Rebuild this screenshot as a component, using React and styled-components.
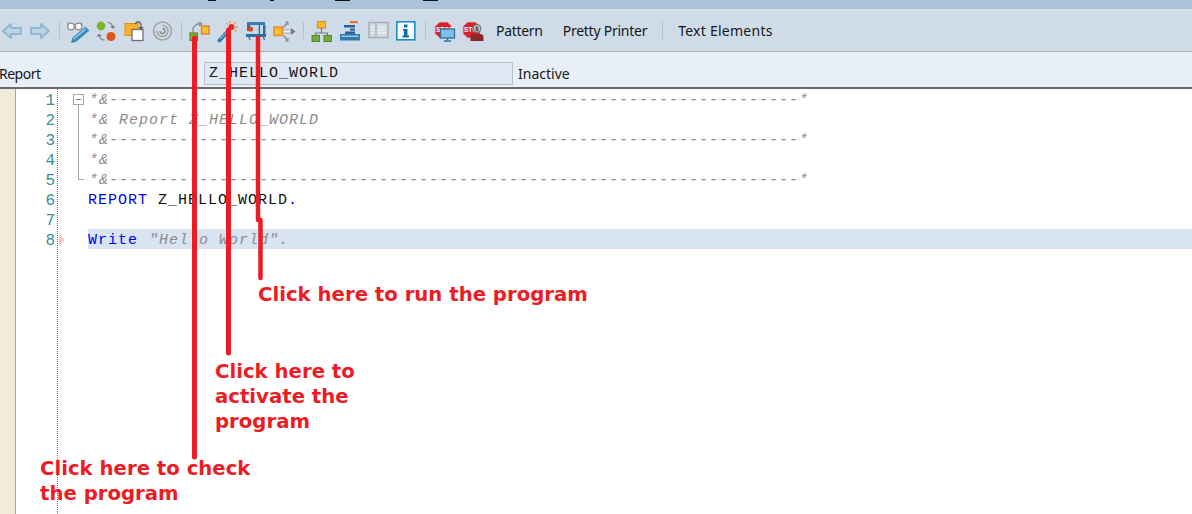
import React from "react";
import styled, { createGlobalStyle } from "styled-components";

const Global = createGlobalStyle`
  html, body {
    margin: 0;
    height: 100%;
    overflow: hidden;
    background: #fff;
  }
  #root {
    height: 100%;
  }
`;

const Page = styled.div`
  position: relative;
  display: flex;
  flex-direction: column;
  width: 1192px;
  height: 514px;
  overflow: hidden;
  font-family: "Noto Sans", sans-serif;
`;

const TitleBar = styled.div`
  position: relative;
  flex: 0 0 9px;
  background: #abc3da;
  border-bottom: 1px solid #dde6ee;
`;

const TitleMark = styled.span`
  position: absolute;
  top: 0;
  left: ${(p) => p.$left}px;
  width: ${(p) => p.$width}px;
  height: 1px;
  background: #111;
`;

const Toolbar = styled.div`
  flex: 0 0 41px;
  display: flex;
  align-items: center;
  margin-left: -2px;
  background: #cfdce7;
  border-bottom: 1px solid #a3afba;
`;

const Tool = styled.div`
  flex: 0 0 28px;
  height: 24px;
  display: flex;
  align-items: center;
  justify-content: center;
  svg {
    display: block;
  }
`;

const Separator = styled.div`
  flex: 0 0 1px;
  height: 17px;
  margin: 0 4px 0 ${(p) => p.$before ?? 5}px;
  background: #a9c3da;
`;

const TextTool = styled.span`
  margin-left: ${(p) => p.$gap}px;
  font-size: 14px;
  letter-spacing: ${(p) => p.$tracking}px;
  color: #14171c;
  white-space: nowrap;
`;

const InfoRow = styled.div`
  flex: 0 0 35px;
  display: flex;
  align-items: center;
  background: #e8eff6;
  border-bottom: 2px solid #6b6b6b;
  font-size: 14px;
  color: #14171c;
`;

const ObjectType = styled.span`
  flex: 0 0 204px;
  padding-top: 7px;
  text-indent: -1px;
  letter-spacing: -0.5px;
`;

const ObjectName = styled.div`
  box-sizing: border-box;
  flex: 0 0 309px;
  height: 23px;
  margin-top: 7px;
  padding-left: 4px;
  background: #dfe9f3;
  border: 1px solid #b6c3cf;
  font: 15px/21px "Liberation Mono", monospace;
  letter-spacing: 1px;
  color: #16161a;
`;

const ObjectStatus = styled.span`
  margin-left: 5px;
  padding-top: 7px;
`;

const Editor = styled.div`
  flex: 1;
  display: flex;
  background: #fff;
`;

const Margin = styled.div`
  flex: 0 0 15px;
  background: #f1ebd9;
  border-right: 1px solid #a6a6a6;
`;

const Numbers = styled.div`
  box-sizing: border-box;
  flex: 0 0 42px;
  padding: 0 2px 0 0;
  border-right: 1px dotted #4f8a8a;
`;

const LineNumber = styled.div`
  box-sizing: border-box;
  height: 20px;
  padding-top: 2px;
  text-align: right;
  font: 16px/20px "Liberation Mono", monospace;
  color: #3a8f90;
`;

const Marker = styled.div`
  flex: 0 0 30px;
  position: relative;
`;

const FoldBox = styled.div`
  position: absolute;
  top: 5px;
  left: 15px;
  box-sizing: border-box;
  width: 11px;
  height: 11px;
  border: 1px solid #a8a8a8;
  &::after {
    content: "";
    position: absolute;
    top: 4px;
    left: 2px;
    width: 5px;
    height: 1px;
    background: #777;
  }
`;

const FoldLine = styled.div`
  position: absolute;
  top: 16px;
  left: 20px;
  box-sizing: border-box;
  width: 6px;
  height: 75px;
  border-left: 1px solid #a8a8a8;
  border-bottom: 1px solid #a8a8a8;
`;

const BreakMark = styled.div`
  position: absolute;
  top: 145px;
  left: 1px;
  width: 0;
  height: 0;
  border-left: 6px solid #f9c4c4;
  border-top: 6px solid transparent;
  border-bottom: 6px solid transparent;
`;

const Code = styled.div`
  flex: 1;
  min-width: 0;
`;

const CodeLine = styled.div`
  box-sizing: border-box;
  height: 20px;
  padding-top: 2px;
  background: ${(p) => (p.$active ? "#d8e4f2" : "transparent")};
  font: 15px/20px "Liberation Mono", monospace;
  letter-spacing: 1px;
  white-space: pre;
  color: #111;
`;

const Comment = styled.span`
  margin-left: 1px;
  font-style: italic;
  color: #8c8c8c;
`;

const Keyword = styled.span`
  color: #0000f0;
`;

const Overlay = styled.svg`
  position: absolute;
  inset: 0;
  pointer-events: none;
`;

const Note = styled.div`
  position: absolute;
  left: ${(p) => p.$left}px;
  top: ${(p) => p.$top}px;
  font: bold 19.7px/25px "DejaVu Sans", sans-serif;
  color: #ed1c24;
  white-space: pre;
`;

const Icon = ({ children }) => (
  <Tool>
    <svg width="26" height="24" viewBox="0 0 26 24" fill="none">
      {children}
    </svg>
  </Tool>
);

const BackIcon = () => (
  <Icon>
    <path d="M4 12 12 5v4h10v6H12v4z" fill="#bcd5e7" stroke="#8fb6d2" strokeWidth="1.8" strokeLinejoin="round" />
  </Icon>
);

const ForwardIcon = () => (
  <Icon>
    <path d="M22 12 14 5v4H4v6h10v4z" fill="#bcd5e7" stroke="#8fb6d2" strokeWidth="1.8" strokeLinejoin="round" />
  </Icon>
);

const GlassesIcon = () => (
  <Icon>
    <circle cx="6" cy="7.5" r="3.3" fill="#fff" stroke="#8a8a8a" strokeWidth="1.2" />
    <circle cx="13.5" cy="7.5" r="3.3" fill="#fff" stroke="#8a8a8a" strokeWidth="1.2" />
    <path d="M9.300 7h1M2.700 7 3 3.500M17 7l-.5-3.500" stroke="#8a8a8a" strokeWidth="1.1" />
    <path d="M20.500 8 24 11.500 11 22.500 6.500 23.500 7.500 19z" fill="#3a8cc0" stroke="#2d76a6" strokeWidth=".6" />
    <path d="M8.500 20 20.500 10" stroke="#a4d2ec" strokeWidth="1.2" />
  </Icon>
);

const SwapIcon = () => (
  <Icon>
    <circle cx="8" cy="7" r="4.4" fill="#7db52a" />
    <circle cx="18" cy="17.5" r="4.6" fill="#e0531b" />
    <path d="M14.500 3.500c3 0 5 1.500 5.500 5.500M20 9l1.800-2M20 9l-2.300-1.500" stroke="#7a7a7a" strokeWidth="1.2" />
    <path d="M11.500 21c-3 0-5-1.500-5.500-5.500M6 15.500l-1.800 2M6 15.500l2.300 1.500" stroke="#7a7a7a" strokeWidth="1.2" />
  </Icon>
);

const CopyIcon = () => (
  <Icon>
    <rect x="4" y="4.500" width="13" height="12" fill="#f7b32c" stroke="#e58e16" />
    <rect x="11" y="10.500" width="11" height="11" fill="#fff" stroke="#6e6e6e" strokeWidth="1.3" />
    <path d="M14 5c2-3 5-3 6 1v4M20 10l-2-2M20 10l2-2" stroke="#555" strokeWidth="1.1" />
  </Icon>
);

const SpiralIcon = () => (
  <Icon>
    <circle cx="13.5" cy="12" r="9" stroke="#a3a3a3" strokeWidth="1.6" />
    <path d="M13.500 6.500a5.500 5.500 0 1 1-5.500 5.500" stroke="#a3a3a3" strokeWidth="1.5" />
    <path d="M13.500 9.500a2.500 2.500 0 1 1-2.500 2.500" stroke="#888" strokeWidth="1.3" />
  </Icon>
);

const CheckIcon = () => (
  <Icon>
    <path d="M6 14V9l4-4h5M15 5l-3-2M15 5l-3 2" stroke="#8a8a8a" strokeWidth="1.3" />
    <rect x="3" y="14" width="7.5" height="7.5" fill="#7db52a" stroke="#5a8a2a" strokeWidth="1.2" />
    <rect x="14.5" y="7" width="7.5" height="8" fill="#fbbf24" stroke="#d9803a" strokeWidth="1.4" />
  </Icon>
);

const WandIcon = () => (
  <Icon>
    <path d="M4.500 21.500 15 10" stroke="#2f79ad" strokeWidth="3.8" strokeLinecap="round" />
    <path d="M5 20 14 10.500" stroke="#9ccbe6" strokeWidth="1" />
    <circle cx="16.5" cy="8" r="3" fill="#d9303a" />
    <path d="M20.500 3l-1.500 2M23 8h-3M21.500 12.500l-2-2M15 2v2.500M11.500 4l1.500 1.500" stroke="#f29a2e" strokeWidth="1.3" />
  </Icon>
);

const RunIcon = () => (
  <Icon>
    <path d="M4 3h18v3H4z" fill="#3a7fae" />
    <path d="M4 6h3v6H4zM15.500 6h1.500v9h-1.500zM20 6h2.500v12H20zM3 15h20v3H3z" fill="#2f6f9f" />
    <path d="M7 6h8.500v2.500H7zM7 11.500h8.500V15H7zM17 6h3v9h-3z" fill="#c4d9e8" />
    <circle cx="7.5" cy="10" r="2.6" fill="#d8481e" />
    <path d="M6 18l1 3M20.500 18l1 3" stroke="#2f6f9f" strokeWidth="1.3" />
  </Icon>
);

const TransportIcon = () => (
  <Icon>
    <rect x="3" y="8" width="8.500" height="8.500" fill="#fbbf24" stroke="#e38a3c" strokeWidth="1.5" />
    <path d="M12 11h8v3h-8z" fill="#eef2f5" stroke="#9a9a9a" strokeWidth=".8" />
    <path d="M24.500 12.500l-4.500-3.500v7z" fill="#777" />
    <path d="M12.500 8.500l4.500-5.500M17 3h-3M17 3v3M12.500 16.500l4.500 5.500M17 22h-3M17 22v-3" stroke="#8a8a8a" strokeWidth="1.2" />
  </Icon>
);

const TreeIcon = () => (
  <Icon>
    <rect x="8.500" y="2.500" width="8" height="6.500" fill="#fbbf24" stroke="#e8862e" strokeWidth="1.2" />
    <path d="M12.500 9v5M6.500 17v-3h12v3" stroke="#777" strokeWidth="1.2" />
    <rect x="3" y="16.5" width="7.5" height="6" fill="#77ab3c" stroke="#528a2e" />
    <rect x="15" y="16.5" width="7.5" height="6" fill="#77ab3c" stroke="#528a2e" />
  </Icon>
);

const StackIcon = () => (
  <Icon>
    <path d="M13 2h8v2.200h-8z" fill="#e8752c" />
    <path d="M7 6h11v2.400H7zM13 9.500h5v2.200h-5zM8 12.500h10v2.400H8z" fill="#2f5f9f" />
    <path d="M3 15h20v6.500H3z" fill="#2f7cad" />
    <path d="M4.500 16.500h17v1.500h-17z" fill="#9cc4dd" />
  </Icon>
);

const LayoutIcon = () => (
  <Icon>
    <rect x="4" y="3.5" width="19" height="15" fill="#d2dae1" stroke="#a8adb2" strokeWidth="1.5" />
    <path d="M11 3.500v15" stroke="#a8adb2" strokeWidth="1.1" />
    <path d="M6 8h3M6 11h3M6 14h3M13 8h8M13 11h8M13 14h8" stroke="#eef1f4" strokeWidth="1.5" />
  </Icon>
);

const InfoIcon = () => (
  <Icon>
    <rect x="3.8" y="2.8" width="18" height="18" fill="#fff" stroke="#1b8ccc" strokeWidth="1.6" />
    <rect x="11" y="5.5" width="3.5" height="3" fill="#0e6fa8" />
    <path d="M10 10h4.500v6.500H16V18.500H9.500v-2H11V12h-1z" fill="#0e6fa8" />
  </Icon>
);

const StopSign = styled.text`
  font: bold 6.5px "Liberation Sans", sans-serif;
  fill: #fff;
`;

const Stop = ({ label }) => (
  <>
    <path d="M8.500 3h8l4.500 4.500v7L16.500 19h-8L4 14.500v-7z" fill="#d32230" stroke="#e9b9bc" strokeWidth=".8" />
    <StopSign x="5" y="12.500">{label}</StopSign>
  </>
);

const StopMonitorIcon = () => (
  <Icon>
    <Stop label="STOP" />
    <rect x="9.5" y="10" width="14" height="9" fill="#7fc0e6" stroke="#2f6f9f" strokeWidth="1.3" />
    <path d="M16.500 19v2M13 22h7" stroke="#2f6f9f" strokeWidth="1.5" />
  </Icon>
);

const StopLockIcon = () => (
  <Icon>
    <Stop label="STOP" />
    <circle cx="18" cy="9.5" r="3.8" fill="#c9c9c9" stroke="#777" strokeWidth="1.3" />
    <rect x="16.5" y="7.5" width="3" height="4.5" fill="#666" />
    <path d="M11.500 22v-4.500c0-1.500 1.500-2.500 3-2.500h7c1.500 0 3 1 3 2.500V22z" fill="#8a2a2c" />
  </Icon>
);

const dashes = "-".repeat(69);

const lines = [
  <Comment>{`*&${dashes}*`}</Comment>,
  <Comment>*& Report Z_HELLO_WORLD</Comment>,
  <Comment>{`*&${dashes}*`}</Comment>,
  <Comment>*&</Comment>,
  <Comment>{`*&${dashes}*`}</Comment>,
  <>
    <Keyword>REPORT</Keyword> Z_HELLO_WORLD<Keyword>.</Keyword>
  </>,
  "",
  <>
    <Keyword>Write</Keyword> <Comment>"Hello World".</Comment>
  </>,
];

export default function App() {
  return (
    <Page>
      <Global />
      <TitleBar>
        <TitleMark $left={208} $width={8} />
        <TitleMark $left={270} $width={4} />
        <TitleMark $left={335} $width={15} />
        <TitleMark $left={423} $width={15} />
      </TitleBar>
      <Toolbar>
        <BackIcon />
        <ForwardIcon />
        <Separator />
        <GlassesIcon />
        <SwapIcon />
        <CopyIcon />
        <SpiralIcon />
        <Separator />
        <CheckIcon />
        <WandIcon />
        <RunIcon />
        <TransportIcon />
        <Separator />
        <TreeIcon />
        <StackIcon />
        <LayoutIcon />
        <InfoIcon />
        <Separator />
        <StopMonitorIcon />
        <StopLockIcon />
        <TextTool $gap={10} $tracking={-0.3}>Pattern</TextTool>
        <TextTool $gap={20} $tracking={-0.25}>Pretty Printer</TextTool>
        <Separator $before={15} />
        <TextTool $gap={11} $tracking={0.25}>Text Elements</TextTool>
      </Toolbar>
      <InfoRow>
        <ObjectType>Report</ObjectType>
        <ObjectName>Z_HELLO_WORLD</ObjectName>
        <ObjectStatus>Inactive</ObjectStatus>
      </InfoRow>
      <Editor>
        <Margin />
        <Numbers>
          {lines.map((_, i) => (
            <LineNumber key={i}>{i + 1}</LineNumber>
          ))}
        </Numbers>
        <Marker>
          <FoldBox />
          <FoldLine />
          <BreakMark />
        </Marker>
        <Code>
          {lines.map((line, i) => (
            <CodeLine key={i} $active={i === 7}>
              {line}
            </CodeLine>
          ))}
        </Code>
      </Editor>
      <Overlay width="1192" height="514" viewBox="0 0 1192 514" fill="none">
        <path d="M194.500 38V457" stroke="#ed1c24" strokeWidth="5" strokeLinecap="round" />
        <path d="M228.500 30V353" stroke="#ed1c24" strokeWidth="5" strokeLinecap="round" />
        <path d="M258 38V220M260.500 220V278" stroke="#ed1c24" strokeWidth="4.5" strokeLinecap="round" />
      </Overlay>
      <Note $left={258} $top={282}>Click here to run the program</Note>
      <Note $left={215} $top={359}>{"Click here to\nactivate the\nprogram"}</Note>
      <Note $left={40} $top={456}>{"Click here to check\nthe program"}</Note>
    </Page>
  );
}
